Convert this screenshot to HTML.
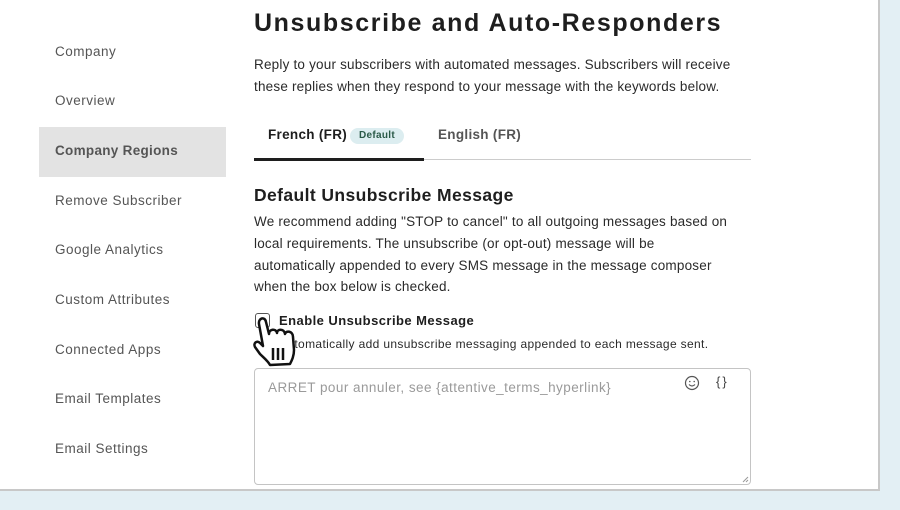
<!DOCTYPE html>
<html><head><meta charset="utf-8"><style>
*{margin:0;padding:0;box-sizing:border-box}
body{width:900px;height:510px;background:#e3eff4;font-family:"Liberation Sans",sans-serif;position:relative;overflow:hidden;color:#1e1e1e}
.card{position:absolute;left:0;top:0;width:880px;height:491px;background:#fff;border-right:2px solid #c8c8c8;border-bottom:2px solid #c8c8c8}
.nav{position:absolute;left:55px;font-size:13.5px;color:#555;letter-spacing:0.5px}
.active{position:absolute;left:39px;top:127px;width:187px;height:50px;background:#e3e3e3}
.t{position:absolute;white-space:nowrap}
</style></head><body>
<div class="card">
<div class="active"></div>
<div class="nav" style="top:44px">Company</div>
<div class="nav" style="top:93px">Overview</div>
<div class="nav" style="top:143px;font-weight:bold;color:#555;letter-spacing:0.3px">Company Regions</div>
<div class="nav" style="top:193px">Remove Subscriber</div>
<div class="nav" style="top:242px">Google Analytics</div>
<div class="nav" style="top:292px">Custom Attributes</div>
<div class="nav" style="top:342px">Connected Apps</div>
<div class="nav" style="top:391px">Email Templates</div>
<div class="nav" style="top:441px">Email Settings</div>

<div class="t" style="left:254px;top:9px;font-size:25px;font-weight:bold;letter-spacing:1.6px">Unsubscribe and Auto-Responders</div>
<div class="t" style="left:254px;top:54px;font-size:13.5px;line-height:22px;color:#2a2a2a;letter-spacing:0.2px">Reply to your subscribers with automated messages. Subscribers will receive<br>these replies when they respond to your message with the keywords below.</div>
<div class="t" style="left:268px;top:127px;font-size:13.5px;font-weight:bold;letter-spacing:0.3px">French (FR)</div>
<div class="t" style="left:350px;top:128px;font-size:10px;font-weight:bold;color:#2a5a48;background:#dcedf0;border-radius:8px;padding:2px 9px;height:16px;letter-spacing:0.3px">Default</div>
<div class="t" style="left:438px;top:127px;font-size:13.5px;font-weight:bold;color:#555;letter-spacing:0.3px">English (FR)</div>
<div style="position:absolute;left:254px;top:159px;width:497px;height:1px;background:#ccc"></div>
<div style="position:absolute;left:254px;top:158px;width:170px;height:3px;background:#1e1e1e"></div>

<div class="t" style="left:254px;top:185px;font-size:17.5px;font-weight:bold;letter-spacing:0.4px">Default Unsubscribe Message</div>
<div class="t" style="left:254px;top:211px;font-size:13.5px;line-height:21.8px;color:#2a2a2a;letter-spacing:0.2px">We recommend adding "STOP to cancel" to all outgoing messages based on<br>local requirements. The unsubscribe (or opt-out) message will be<br>automatically appended to every SMS message in the message composer<br>when the box below is checked.</div>
<div style="position:absolute;left:255px;top:313px;width:15px;height:15px;border:1.5px solid #555;border-radius:3px"></div>
<div class="t" style="left:279px;top:313px;font-size:13px;font-weight:bold;letter-spacing:0.45px">Enable Unsubscribe Message</div>
<div class="t" style="left:279px;top:337px;font-size:12px;color:#2a2a2a;letter-spacing:0.35px">Automatically add unsubscribe messaging appended to each message sent.</div>
<svg style="position:absolute;left:250px;top:310px" width="50" height="60" viewBox="0 0 50 60"><path d="M9 14 C8 8 15 6 16 12 L19 24 C19 19 26 18 27 23 C27 19 34 18 35 24 C36 20 43 21 43 27 L44 40 C44 46 42 50 40 54 L20 55 C18 51 14 48 10 44 L5 37 C3 33 7 30 10 33 L13 36 Z" fill="#fff" stroke="#111" stroke-width="2.5" stroke-linejoin="round"/><path d="M23 38v12M28 38v12M33 38v12" stroke="#111" stroke-width="2.5"/></svg>
<div style="position:absolute;left:254px;top:368px;width:497px;height:117px;border:1px solid #c4c4c4;border-radius:4px"></div>
<div class="t" style="left:268px;top:380px;font-size:13.5px;color:#9a9a9a;letter-spacing:0.45px">ARRET pour annuler, see {attentive_terms_hyperlink}</div>
<svg style="position:absolute;left:684px;top:375px" width="16" height="16" viewBox="0 0 16 16"><circle cx="8" cy="8" r="6.5" fill="none" stroke="#555" stroke-width="1.2"/><circle cx="5.8" cy="6.5" r="0.8" fill="#555"/><circle cx="10.2" cy="6.5" r="0.8" fill="#555"/><path d="M5 9.5 Q8 12.5 11 9.5" fill="none" stroke="#555" stroke-width="1.2"/></svg>
<div class="t" style="left:716px;top:374px;font-size:13px;color:#444;letter-spacing:2px">{}</div>
<svg style="position:absolute;left:742px;top:476px" width="7" height="7"><path d="M1 6L6 1M4 6L6 4" stroke="#999" stroke-width="1"/></svg>
</div>
</body></html>
